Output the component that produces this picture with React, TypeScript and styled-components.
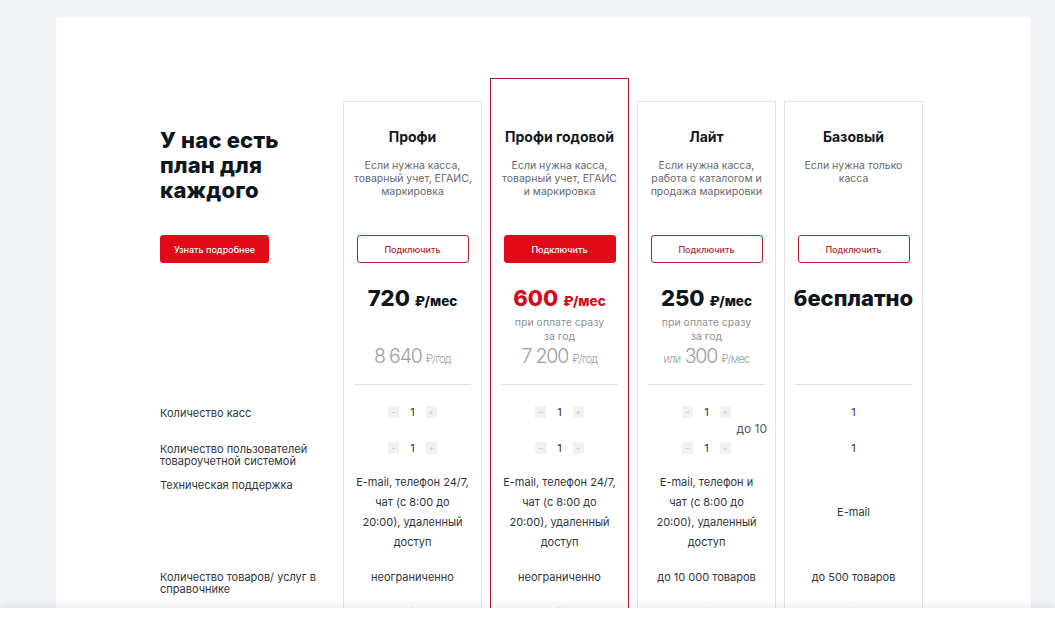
import React from 'react';
import styled, { createGlobalStyle, css } from 'styled-components';

const Global = createGlobalStyle`
  html, body { margin: 0; padding: 0; background: #f1f2f5; overflow: hidden; }
  body { font-family: Inter, "Noto Sans", "Liberation Sans", sans-serif; color: #141a22; }
  * { box-sizing: border-box; }
`;

const Page = styled.div`
  height: 621px;
  padding: 17px 24px 0 56px;
`;

const Panel = styled.main`
  background: #fff;
  height: 100%;
  overflow: hidden;
  padding: 84px 0 0 103px;
`;

const Table = styled.div`
  display: flex;
  align-items: flex-start;
  gap: 8px;
`;

const Column = styled.div<{ $plain?: boolean; $featured?: boolean }>`
  width: ${(p) => (p.$plain ? 176 : 139)}px;
  border: 1px solid #e3e5e8;
  padding: 26px 10px 60px;
  display: flex;
  flex-direction: column;
  ${(p) =>
    p.$plain &&
    css`
      border-color: transparent;
      padding-left: 0;
      padding-right: 0;
    `}
  ${(p) =>
    p.$featured &&
    css`
      border-color: #a51c2f;
      margin-top: -23px;
      padding-top: 49px;
    `}
`;

const Head = styled.div`
  height: 272px;
  display: flex;
  flex-direction: column;
`;

const Heading = styled.h2`
  margin: 0;
  height: 107px;
  font-size: 22px;
  line-height: 25px;
  font-weight: 800;
  color: #0e1620;
  letter-spacing: 0.2px;
`;

const TopBlock = styled.div`
  height: 107px;
  text-align: center;
`;

const Title = styled.div`
  font-size: 14px;
  line-height: 17px;
  font-weight: 700;
  color: #111820;
  white-space: nowrap;
`;

const Desc = styled.div`
  margin-top: 14px;
  font-size: 10.5px;
  line-height: 13px;
  color: #66696e;
  white-space: nowrap;
`;

const Button = styled.button<{ $filled?: boolean; $w?: number }>`
  display: block;
  width: ${(p) => p.$w ?? 112}px;
  height: 28px;
  margin: 0 ${(p) => (p.$w ? 'auto 0 0' : 'auto')};
  border-radius: 3px;
  font-family: inherit;
  font-size: 9px;
  font-weight: 500;
  padding: 0;
  cursor: pointer;
  ${(p) =>
    p.$filled
      ? css`
          background: #e10817;
          border: 1px solid #e10817;
          color: #fff;
        `
      : css`
          background: #fff;
          border: 1px solid #b5202f;
          color: #b81f2e;
        `}
`;

const PriceBlock = styled.div`
  margin-top: 22px;
  height: 83px;
  display: flex;
  flex-direction: column;
  justify-content: space-between;
  align-items: center;
  text-align: center;
`;

const MainPrice = styled.div<{ $red?: boolean }>`
  font-size: 22px;
  line-height: 26px;
  font-weight: 800;
  white-space: nowrap;
  color: ${(p) => (p.$red ? '#d50b1d' : '#0e1620')};
  span {
    font-size: 13.5px;
    margin-left: 5px;
  }
`;

const Secondary = styled.div`
  font-size: 10.5px;
  line-height: 14px;
  color: #8d9094;
  white-space: nowrap;
`;

const Annual = styled.div`
  margin-top: 3px;
  font-size: 19.5px;
  line-height: 18px;
  font-weight: 300;
  letter-spacing: -1.2px;
  color: #9a9da1;
  white-space: nowrap;
  small {
    font-size: 11px;
    letter-spacing: -0.7px;
  }
`;

const Divider = styled.hr`
  margin: 16px 0 15px;
  border: 0;
  height: 1px;
  background: #dcdee1;
`;

const Row = styled.div<{ $h: number }>`
  height: ${(p) => p.$h}px;
  display: flex;
  flex-direction: column;
`;

const Label = styled.div`
  padding-top: 7px;
  font-size: 11px;
  line-height: 12px;
  color: #30353b;
  white-space: nowrap;
`;

const Stepper = styled.div`
  margin-top: 6px;
  height: 12px;
  display: flex;
  align-items: center;
  justify-content: center;
  gap: 11px;
  font-size: 11px;
  color: #30353b;
`;

const StepBtn = styled.span`
  width: 11px;
  height: 12px;
  background: #f0f1f2;
  color: #c3c6c9;
  font-size: 8px;
  line-height: 12px;
  text-align: center;
`;

const Note = styled.div`
  margin: 4px -2px 0 0;
  text-align: right;
  font-size: 12px;
  line-height: 14px;
  color: #55595e;
`;

const Plain = styled.div`
  margin-top: 6px;
  font-size: 11px;
  line-height: 12px;
  text-align: center;
  color: #30353b;
`;

const TextValue = styled.div<{ $box?: number; $top?: number }>`
  height: ${(p) => (p.$box ? `${p.$box}px` : 'auto')};
  margin-top: ${(p) => p.$top ?? 0}px;
  display: flex;
  align-items: center;
  justify-content: center;
  text-align: center;
  font-size: 11px;
  line-height: 20px;
  color: #30353b;
  white-space: nowrap;
`;

const Mark = styled.div`
  margin-top: 4px;
  text-align: center;
  font-size: 12px;
  line-height: 12px;
  color: #6a6e73;
`;

const BottomBar = styled.div`
  position: fixed;
  left: 0;
  right: 0;
  bottom: 0;
  height: 13px;
  background: #fff;
  box-shadow: 0 -3px 9px rgba(0, 0, 0, 0.07);
`;

type Plan = {
  title: string;
  desc: React.ReactNode;
  filled?: boolean;
  featured?: boolean;
  price: React.ReactNode;
  red?: boolean;
  secondary?: React.ReactNode;
  annual?: React.ReactNode;
  steppers: boolean;
  note?: string;
  support: React.ReactNode;
  goods: string;
};

const plans: Plan[] = [
  {
    title: 'Профи',
    desc: (
      <>
        Если нужна касса,
        <br />
        товарный учет, ЕГАИС,
        <br />
        маркировка
      </>
    ),
    price: (
      <>
        720<span>₽/мес</span>
      </>
    ),
    annual: (
      <>
        8 640 <small>₽/год</small>
      </>
    ),
    steppers: true,
    support: (
      <>
        E-mail, телефон 24/7,
        <br />
        чат (с 8:00 до
        <br />
        20:00), удаленный
        <br />
        доступ
      </>
    ),
    goods: 'неограниченно',
  },
  {
    title: 'Профи годовой',
    desc: (
      <>
        Если нужна касса,
        <br />
        товарный учет, ЕГАИС
        <br />и маркировка
      </>
    ),
    filled: true,
    featured: true,
    red: true,
    price: (
      <>
        600<span>₽/мес</span>
      </>
    ),
    secondary: (
      <>
        при оплате сразу
        <br />
        за год
      </>
    ),
    annual: (
      <>
        7 200 <small>₽/год</small>
      </>
    ),
    steppers: true,
    support: (
      <>
        E-mail, телефон 24/7,
        <br />
        чат (с 8:00 до
        <br />
        20:00), удаленный
        <br />
        доступ
      </>
    ),
    goods: 'неограниченно',
  },
  {
    title: 'Лайт',
    desc: (
      <>
        Если нужна касса,
        <br />
        работа с каталогом и
        <br />
        продажа маркировки
      </>
    ),
    price: (
      <>
        250<span>₽/мес</span>
      </>
    ),
    secondary: (
      <>
        при оплате сразу
        <br />
        за год
      </>
    ),
    annual: (
      <>
        <small>или</small> 300 <small>₽/мес</small>
      </>
    ),
    steppers: true,
    note: 'до 10',
    support: (
      <>
        E-mail, телефон и
        <br />
        чат (с 8:00 до
        <br />
        20:00), удаленный
        <br />
        доступ
      </>
    ),
    goods: 'до 10 000 товаров',
  },
  {
    title: 'Базовый',
    desc: (
      <>
        Если нужна только
        <br />
        касса
      </>
    ),
    price: <>бесплатно</>,
    steppers: false,
    support: <>E-mail</>,
    goods: 'до 500 товаров',
  },
];

const Counter = () => (
  <Stepper>
    <StepBtn>−</StepBtn>
    <span>1</span>
    <StepBtn>+</StepBtn>
  </Stepper>
);

export default function App() {
  return (
    <>
      <Global />
      <Page>
        <Panel>
          <Table>
            <Column $plain>
              <Head>
                <Heading>
                  У нас есть
                  <br />
                  план для
                  <br />
                  каждого
                </Heading>
                <Button $filled $w={109}>
                  Узнать подробнее
                </Button>
              </Head>
              <Row $h={36}>
                <Label>Количество касс</Label>
              </Row>
              <Row $h={36}>
                <Label>
                  Количество пользователей
                  <br />
                  товароучетной системой
                </Label>
              </Row>
              <Row $h={92}>
                <Label>Техническая поддержка</Label>
              </Row>
              <Row $h={36}>
                <Label>
                  Количество товаров/ услуг в
                  <br />
                  справочнике
                </Label>
              </Row>
              <Row $h={40}>
                <Label>Маркировка</Label>
              </Row>
            </Column>
            {plans.map((p) => (
              <Column key={p.title} $featured={p.featured}>
                <Head>
                  <TopBlock>
                    <Title>{p.title}</Title>
                    <Desc>{p.desc}</Desc>
                  </TopBlock>
                  <Button $filled={p.filled}>Подключить</Button>
                  <PriceBlock>
                    <MainPrice $red={p.red}>{p.price}</MainPrice>
                    <div>
                      {p.secondary && <Secondary>{p.secondary}</Secondary>}
                      {p.annual && <Annual>{p.annual}</Annual>}
                    </div>
                  </PriceBlock>
                  <Divider />
                </Head>
                <Row $h={36}>
                  {p.steppers ? <Counter /> : <Plain>1</Plain>}
                  {p.note && <Note>{p.note}</Note>}
                </Row>
                <Row $h={36}>{p.steppers ? <Counter /> : <Plain>1</Plain>}</Row>
                <Row $h={92}>
                  <TextValue $box={80}>{p.support}</TextValue>
                </Row>
                <Row $h={36}>
                  <TextValue $top={3}>{p.goods}</TextValue>
                </Row>
                <Row $h={40}>
                  <Mark>+</Mark>
                </Row>
              </Column>
            ))}
          </Table>
        </Panel>
      </Page>
      <BottomBar />
    </>
  );
}
